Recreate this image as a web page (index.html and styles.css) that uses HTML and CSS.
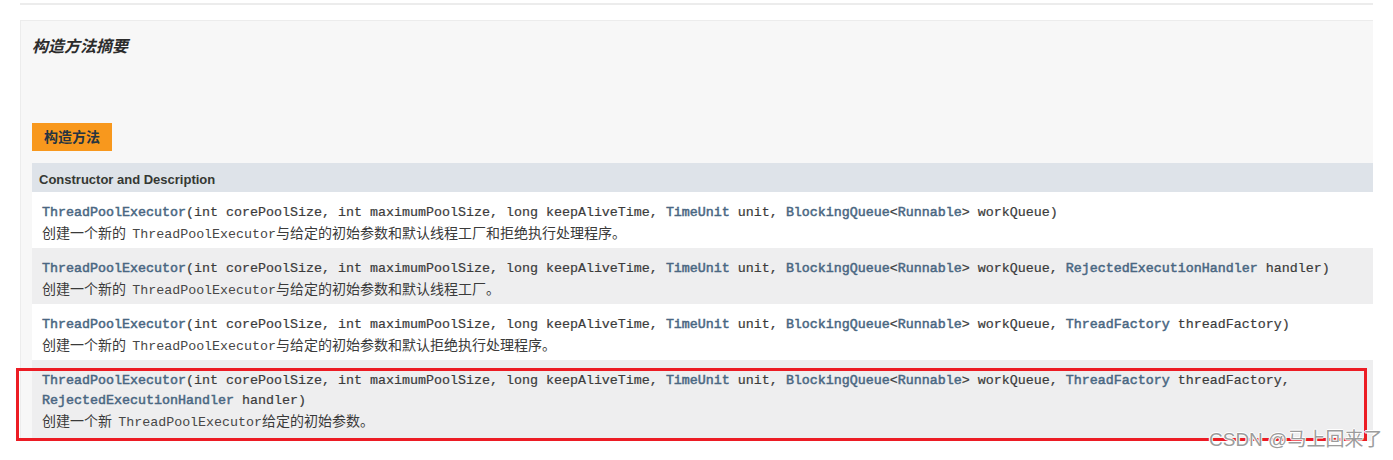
FILE: index.html
```html
<!DOCTYPE html>
<html lang="zh-CN">
  <head>
    <meta charset="UTF-8" />
    <meta name="viewport" content="width=device-width, initial-scale=1.0" />
    <title>ThreadPoolExecutor 构造方法摘要</title>
    <link rel="stylesheet" href="styles.css">
  </head>
  <body>
    <div class="top-line"></div>
    <section class="summary">
      <h3>构造方法摘要</h3>
      <div class="caption">构造方法</div>
      <table class="member-summary">
        <thead>
          <tr>
            <th>Constructor and Description</th>
          </tr>
        </thead>
        <tbody>
          <tr class="row-white">
            <td>
              <code><a class="name">ThreadPoolExecutor</a>(int&nbsp;corePoolSize, int&nbsp;maximumPoolSize, long&nbsp;keepAliveTime, <a>TimeUnit</a>&nbsp;unit, <a>BlockingQueue</a>&lt;<a>Runnable</a>&gt;&nbsp;workQueue)</code>
              <div class="desc">创建一个新的 <code>ThreadPoolExecutor</code>与给定的初始参数和默认线程工厂和拒绝执行处理程序。</div>
            </td>
          </tr>
          <tr class="row-grey">
            <td>
              <code><a class="name">ThreadPoolExecutor</a>(int&nbsp;corePoolSize, int&nbsp;maximumPoolSize, long&nbsp;keepAliveTime, <a>TimeUnit</a>&nbsp;unit, <a>BlockingQueue</a>&lt;<a>Runnable</a>&gt;&nbsp;workQueue, <a>RejectedExecutionHandler</a>&nbsp;handler)</code>
              <div class="desc">创建一个新的 <code>ThreadPoolExecutor</code>与给定的初始参数和默认线程工厂。</div>
            </td>
          </tr>
          <tr class="row-white">
            <td>
              <code><a class="name">ThreadPoolExecutor</a>(int&nbsp;corePoolSize, int&nbsp;maximumPoolSize, long&nbsp;keepAliveTime, <a>TimeUnit</a>&nbsp;unit, <a>BlockingQueue</a>&lt;<a>Runnable</a>&gt;&nbsp;workQueue, <a>ThreadFactory</a>&nbsp;threadFactory)</code>
              <div class="desc">创建一个新的 <code>ThreadPoolExecutor</code>与给定的初始参数和默认拒绝执行处理程序。</div>
            </td>
          </tr>
          <tr class="row-grey last">
            <td>
              <code><a class="name">ThreadPoolExecutor</a>(int&nbsp;corePoolSize, int&nbsp;maximumPoolSize, long&nbsp;keepAliveTime, <a>TimeUnit</a>&nbsp;unit, <a>BlockingQueue</a>&lt;<a>Runnable</a>&gt;&nbsp;workQueue, <a>ThreadFactory</a>&nbsp;threadFactory,<br><a>RejectedExecutionHandler</a>&nbsp;handler)</code>
              <div class="desc">创建一个新 <code>ThreadPoolExecutor</code>给定的初始参数。</div>
            </td>
          </tr>
        </tbody>
      </table>
    </section>
    <div class="highlight"></div>
    <div class="watermark">CSDN @马上回来了</div>
  </body>
</html>
```

FILE: styles.css
```css
:root {
  --text-color: #353833;
  --link-color: #4a6782;
  --caption-color: #f8981d;
  --border-color: #ececec;
}

html {
  box-sizing: border-box;
}

*,
*::before,
*::after {
  box-sizing: border-box;
}

body {
  margin: 0;
  padding: 3px 20px 0;
  min-height: 460px;
  position: relative;
  background: #fff;
  color: var(--text-color);
  font-family: "Liberation Sans", Arial, "Noto Sans CJK SC", sans-serif;
}

.top-line {
  height: 2px;
  background-color: var(--border-color);
  margin-bottom: 15px;
}

.summary {
  border-top: 1px solid var(--border-color);
  border-left: 1px solid var(--border-color);
  background-color: #f7f7f7;
  padding: 15px 0 0 11px;
}

.summary h3 {
  margin: 0;
  font-size: 16px;
  line-height: 22px;
  font-style: italic;
  font-weight: bold;
  font-family: "Liberation Sans", "Noto Sans CJK SC", sans-serif;
  color: #2b2b2b;
}

.caption {
  display: inline-block;
  margin-top: 65px;
  height: 28px;
  line-height: 28px;
  padding: 0 12px;
  background-color: var(--caption-color);
  color: #253441;
  font-size: 14px;
  font-weight: bold;
  font-family: "Liberation Sans", "Noto Sans CJK SC", sans-serif;
}

.member-summary {
  display: table;
  width: 100%;
  margin-top: 12px;
  border-collapse: collapse;
}

.member-summary th {
  text-align: left;
  background-color: #dee3e9;
  padding: 8px 7px 3px;
  line-height: 18px;
  font-size: 13px;
  font-weight: bold;
}

.member-summary td {
  padding: 11px 3px 6px 10px;
  vertical-align: top;
}

.row-white {
  background-color: #fff;
}

.row-grey {
  background-color: #eeeeef;
}

.row-grey.last td {
  padding-bottom: 11px;
}

.member-summary code {
  display: block;
  font-family: "Liberation Mono", "Courier New", monospace;
  font-size: 13.333px;
  line-height: 20px;
  color: #3b3b3b;
  -webkit-text-stroke: 0.2px;
}

.member-summary code a {
  color: var(--link-color);
  -webkit-text-stroke: 0.5px;
  text-decoration: none;
}

.desc {
  font-family: "Noto Sans CJK SC", sans-serif;
  font-size: 14px;
  line-height: 18px;
  color: #3a3a3a;
}

.desc code {
  display: inline;
  margin-left: 3px;
  line-height: 14px;
  color: #474747;
  -webkit-text-stroke: 0;
}

.highlight {
  position: absolute;
  left: 16px;
  top: 368px;
  width: 1351px;
  height: 73px;
  border: 3px solid #ec1c24;
  pointer-events: none;
}

.watermark {
  position: absolute;
  left: 1209px;
  top: 428px;
  font-family: "Liberation Sans", "Noto Sans CJK SC", sans-serif;
  font-size: 19px;
  line-height: 24px;
  color: #9c9c9c;
  text-shadow: 1px 0 0 #fff, -1px 0 0 #fff, 0 1px 0 #fff, 0 -1px 0 #fff;
  white-space: nowrap;
}
```
